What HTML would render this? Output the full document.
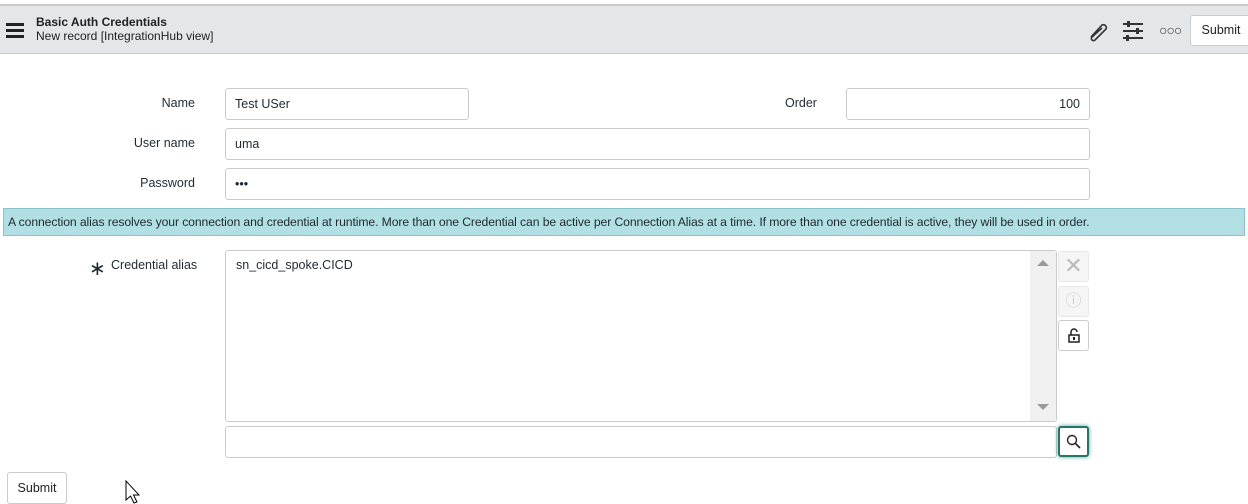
<!DOCTYPE html>
<html><head><style>
body{margin:0;width:1248px;height:504px;background:#fff;font-family:"Liberation Sans",sans-serif;font-size:12.5px;color:#1f2a30;position:relative;overflow:hidden}
.a{position:absolute}
.inp{position:absolute;border:1px solid #cbcbcb;border-radius:3px;background:#fff;box-sizing:border-box;padding:0 9px;line-height:30px}
.lbl{position:absolute;text-align:right;width:195px;left:0}
.btn{position:absolute;border:1px solid #ccc;border-radius:3px;background:#fff;box-sizing:border-box;text-align:center}
</style></head><body>
<div class="a" style="left:0;top:0;width:1248px;height:4px;background:#fff;border-bottom:2px solid #c9c9c9"></div>
<div class="a" style="left:0;top:6px;width:1248px;height:47px;background:#e4e6e7;border-bottom:1px solid #c8c8c8"></div>
<div class="a" style="left:6px;top:23px;width:18px;height:3px;background:#222;box-shadow:0 6px 0 #222,0 12px 0 #222"></div>
<div class="a" style="left:36px;top:15px;font-size:12px;font-weight:bold;color:#222">Basic Auth Credentials</div>
<div class="a" style="left:36px;top:29px;font-size:12px;color:#222">New record [IntegrationHub view]</div>
<svg class="a" style="left:1086px;top:20px" width="22" height="22" viewBox="0 0 22 22"><path d="M5 17 L16 5 a3 3 0 0 1 4 4 L9 20 a2 2 0 0 1 -3 -3 L16 8" fill="none" stroke="#333" stroke-width="1.6"/></svg>
<svg class="a" style="left:1122px;top:20px" width="22" height="22"><path d="M1 4H21M1 11H21M1 18H21" stroke="#333" stroke-width="2"/><rect x="5" y="1" width="3" height="6" fill="#333"/><rect x="14" y="8" width="3" height="6" fill="#333"/><rect x="4" y="15" width="3" height="6" fill="#333"/></svg>
<div class="a" style="left:1159px;top:22px;font-size:14px;letter-spacing:-1px;color:#333">○○○</div>
<div class="btn" style="left:1190px;top:15px;width:62px;height:31px;line-height:29px;color:#222">Submit</div>

<div class="lbl" style="top:96px">Name</div>
<div class="inp" style="left:225px;top:88px;width:244px;height:32px">Test USer</div>
<div class="a" style="left:785px;top:96px">Order</div>
<div class="inp" style="left:846px;top:88px;width:244px;height:32px;text-align:right">100</div>
<div class="lbl" style="top:136px">User name</div>
<div class="inp" style="left:225px;top:128px;width:865px;height:32px">uma</div>
<div class="lbl" style="top:176px">Password</div>
<div class="inp" style="left:225px;top:168px;width:865px;height:32px">•••</div>
<div class="a" style="left:3px;top:208px;width:1242px;height:28px;background:#b2dfe4;border:1px solid #8ac4cc;box-sizing:border-box;line-height:26px;padding-left:4px;font-size:12.2px;letter-spacing:-0.1px;color:#1f2a30">A connection alias resolves your connection and credential at runtime. More than one Credential can be active per Connection Alias at a time. If more than one credential is active, they will be used in order.</div>
<div class="a" style="left:89px;top:256px;font-size:20px">∗</div>
<div class="a" style="left:111px;top:258px">Credential alias</div>
<div class="a" style="left:225px;top:250px;width:832px;height:172px;border:1px solid #cbcbcb;border-radius:3px;box-sizing:border-box"></div>
<div class="a" style="left:1030px;top:251px;width:26px;height:170px;background:#f0f0f0"></div>
<div class="a" style="left:1037px;top:260px;border:6px solid transparent;border-bottom:6px solid #999;border-top:0"></div>
<div class="a" style="left:1037px;top:404px;border:6px solid transparent;border-top:6px solid #999;border-bottom:0"></div>
<div class="a" style="left:236px;top:258px">sn_cicd_spoke.CICD</div>
<div class="btn" style="left:1058px;top:251px;width:31px;height:31px;background:#f5f5f5;border-color:#e8e8e8;color:#bbb;font-size:22px;line-height:28px">✕</div>
<div class="btn" style="left:1058px;top:286px;width:31px;height:31px;background:#f5f5f5;border-color:#e8e8e8;color:#ccc;font-size:16px;line-height:29px">ⓘ</div>
<div class="btn" style="left:1058px;top:320px;width:31px;height:31px"><svg width="14" height="16" style="margin-top:7px"><path d="M4 7V4a3 3 0 0 1 6 0" fill="none" stroke="#222" stroke-width="1.5"/><rect x="2" y="7" width="10" height="7" fill="none" stroke="#222" stroke-width="1.5"/><rect x="6" y="9" width="2" height="3" fill="#222"/></svg></div>
<div class="inp" style="left:225px;top:426px;width:832px;height:32px"></div>
<div class="btn" style="left:1058px;top:426px;width:31px;height:31px;border:2px solid #26756a;box-shadow:0 0 4px #4aa597"><svg width="16" height="16" style="margin-top:6px"><circle cx="6" cy="6" r="4.5" fill="none" stroke="#222" stroke-width="1.4"/><path d="M9 9l5 5" stroke="#222" stroke-width="1.6"/></svg></div>
<div class="btn" style="left:7px;top:472px;width:60px;height:32px;line-height:30px;color:#222">Submit</div>
<svg class="a" style="left:124px;top:480px" width="22" height="24"><path d="M2 1V20L6.5 16L10 23L13 22L9.5 15H15Z" fill="#fff" stroke="#000"/></svg>
</body></html>
